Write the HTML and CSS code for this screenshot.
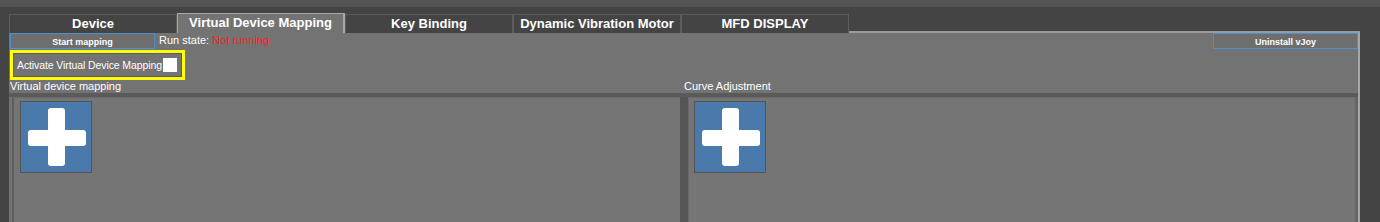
FILE: index.html
```html
<!DOCTYPE html>
<html>
<head>
<meta charset="utf-8">
<link rel="stylesheet" href="styles.css">
</head>
<body>
<div class="topbar"></div>
<div class="tabs">
  <div class="tab">Device</div>
  <div class="tab active">Virtual Device Mapping</div>
  <div class="tab">Key Binding</div>
  <div class="tab">Dynamic Vibration Motor</div>
  <div class="tab">MFD DISPLAY</div>
</div>
<div class="panel">
  <div class="row1">
    <div class="btn">Start mapping</div>
    <div class="runstate">Run state: <span class="red">Not running</span></div>
    <div class="spacer"></div>
    <div class="btn">Uninstall vJoy</div>
  </div>
  <div class="activate">
    <div class="activate-inner">
      <span class="act-text">Activate Virtual Device Mapping</span>
      <span class="check"></span>
    </div>
  </div>
  <div class="labels">
    <div class="lbl left">Virtual device mapping</div>
    <div class="lbl right">Curve Adjustment</div>
  </div>
  <div class="groups">
    <div class="group gleft">
      <div class="plus"><svg width="72" height="72" viewBox="0 0 72 72"><rect x="28" y="7" width="17" height="58" rx="3" fill="#fff"/><rect x="8" y="29" width="58" height="16" rx="3" fill="#fff"/></svg></div>
    </div>
    <div class="divider"></div>
    <div class="group gright">
      <div class="plus"><svg width="72" height="72" viewBox="0 0 72 72"><rect x="28" y="7" width="17" height="58" rx="3" fill="#fff"/><rect x="8" y="29" width="58" height="16" rx="3" fill="#fff"/></svg></div>
    </div>
  </div>
</div>
</body>
</html>
```
FILE: styles.css
```css
html, body {
  margin: 0;
  padding: 0;
}
body {
  background: #444444;
  font-family: "Liberation Sans", Arial, sans-serif;
  color: #ffffff;
  width: 1380px;
  height: 222px;
  overflow: hidden;
}
.topbar {
  height: 7px;
  background: #545454;
}
.tabs {
  display: flex;
  margin-left: 9px;
  margin-top: 6px;
  height: 18px;
  position: relative;
  z-index: 2;
}
.tab {
  box-sizing: border-box;
  width: 168px;
  height: 19px;
  margin-top: 1px;
  border: 1px solid #5c5c5c;
  border-bottom: none;
  background: #444444;
  font-weight: bold;
  font-size: 13px;
  line-height: 17px;
  text-align: center;
  color: #ffffff;
}
.tab.active {
  margin-top: 0;
  height: 20px;
  background: #737373;
  border-color: #a8a8a8;
  border-width: 1px 2px 0 1px;
}
.panel {
  margin-left: 9px;
  width: 1351px;
  box-sizing: border-box;
  height: 191px;
  background: #737373;
  border-top: 2px solid #9a9a9a;
  border-right: 2px solid #a6a6a6;
  display: flex;
  flex-direction: column;
}
.row1 {
  display: flex;
  height: 16px;
  padding-left: 1px;
}
.btn {
  box-sizing: border-box;
  width: 145px;
  height: 16px;
  border: 1px solid #4f8fcb;
  background: #6e6e6e;
  font-size: 9px;
  font-weight: bold;
  line-height: 15px;
  padding-top: 1px;
  text-align: center;
}
.runstate {
  font-size: 11px;
  margin-left: 4px;
  line-height: 12px;
  padding-top: 1px;
}
.red {
  color: #ff2020;
}
.spacer {
  flex: 1;
}
.activate {
  margin-top: 1px;
  margin-left: 1px;
  width: 175px;
  height: 30px;
  box-sizing: border-box;
  border: 3px solid #ffff00;
}
.activate-inner {
  box-sizing: border-box;
  height: 24px;
  border: 1px solid #595979;
  display: flex;
  align-items: center;
  padding-left: 3px;
  font-size: 10.5px;
  white-space: nowrap;
}
.act-text {
  letter-spacing: -0.1px;
}
.check {
  width: 14px;
  height: 14px;
  background: #ffffff;
  margin-left: 1px;
  flex: none;
}
.labels {
  display: flex;
  height: 13px;
  font-size: 11px;
  line-height: 13px;
  margin-top: 0;
}
.lbl.left {
  width: 674px;
  padding-left: 1px;
}
.groups {
  flex: 1;
  display: flex;
  border-top: 4px solid #5a5a5a;
  margin-top: 0;
}
.group {
  background: #757575;
  border-left: 1px solid #6a6a6a;
  border-top: 1px solid #6a6a6a;
  padding: 3px 0 0 6px;
}
.gleft {
  margin-left: 3px;
  width: 660px;
  border-left: 2px solid #5e5e5e;
}
.divider {
  width: 8px;
  background: #555555;
}
.gright {
  flex: 1;
  padding-left: 5px;
  border-right: 3px solid #666666;
}
.plus {
  width: 72px;
  height: 72px;
  box-sizing: border-box;
  border: 1px solid #555555;
  background: #4a7aab;
}
.plus svg {
  display: block;
  margin: -1px;
}
```
